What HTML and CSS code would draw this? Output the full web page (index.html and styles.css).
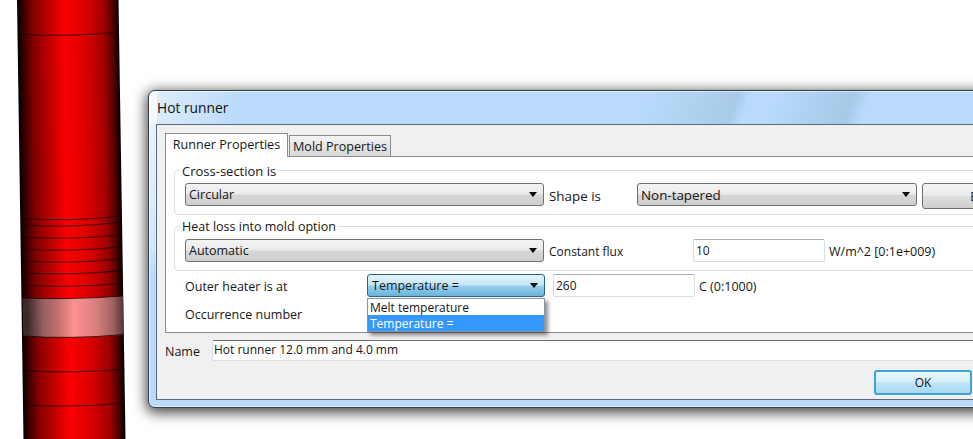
FILE: index.html
```html
<!DOCTYPE html>
<html lang="en">
<head>
<meta charset="utf-8">
<title>Hot runner</title>
<link rel="stylesheet" href="styles.css">
</head>
<body>
<div class="stage">
  <svg class="pipe" width="140" height="439" viewBox="0 0 140 439" aria-hidden="true">
    <defs>
      <linearGradient id="red" gradientUnits="userSpaceOnUse" x1="17" y1="0" x2="119" y2="-1.4">
        <stop offset="0" stop-color="#000"/>
        <stop offset=".05" stop-color="#300000"/>
        <stop offset=".15" stop-color="#800000"/>
        <stop offset=".3" stop-color="#bb0000"/>
        <stop offset=".46" stop-color="#fa0000"/>
        <stop offset=".5" stop-color="#f40000"/>
        <stop offset=".68" stop-color="#d80000"/>
        <stop offset=".85" stop-color="#a00000"/>
        <stop offset=".94" stop-color="#500000"/>
        <stop offset="1" stop-color="#000"/>
      </linearGradient>
      <linearGradient id="pink" gradientUnits="userSpaceOnUse" x1="23" y1="0" x2="124" y2="-1.4">
        <stop offset="0" stop-color="#3a2a2a"/>
        <stop offset=".15" stop-color="#945e5e"/>
        <stop offset=".3" stop-color="#c07070"/>
        <stop offset=".46" stop-color="#ff9090"/>
        <stop offset=".68" stop-color="#d88080"/>
        <stop offset=".85" stop-color="#a06060"/>
        <stop offset=".94" stop-color="#5a3a3a"/>
        <stop offset="1" stop-color="#3a2828"/>
      </linearGradient>
    </defs>
    <polygon points="17,0 118.5,0 125.5,439 23.5,439" fill="url(#red)"/>
    <path d="M22.500 298 Q70 299.500 123 296 L123.500 335 Q70 339.500 23 336 Z" fill="url(#pink)"/>
    <g fill="none" stroke="#1a0000" stroke-width=".8">
      <path d="M17.500 34 Q70 37.500 119 32"/>
      <path d="M21 218.500 Q70 222 121.500 216"/>
      <path d="M21 225 Q70 228.500 121.500 222"/>
      <path d="M21 237 Q70 240.500 122 234.500"/>
      <path d="M21.500 249 Q70 252.500 122 246.500"/>
      <path d="M21.500 261 Q70 264.500 122 258.500"/>
      <path d="M21.500 272.500 Q70 276 122.500 270.500"/>
      <path d="M22 285 Q70 288.500 123 283"/>
      <path d="M22 298 Q70 300 123 296"/>
      <path d="M22.500 336 Q70 339.500 124 334.500"/>
      <path d="M23 370.500 Q70 374 124.500 369"/>
      <path d="M23.500 405 Q70 408 125 403"/>
    </g>
  </svg>

  <section class="dialog">
    <h1 class="title">Hot runner</h1>
    <div class="client">
      <div class="tabs">
        <span class="tab tab-active">Runner Properties</span>
        <span class="tab">Mold Properties</span>
      </div>
      <div class="pane">
        <fieldset class="group">
          <legend class="fs-13">Cross-section is</legend>
          <div class="row">
            <div class="select w-wide"><span class="fs-125">Circular</span><i class="arrow"></i></div>
            <span class="label w-shape fs-135">Shape is</span>
            <div class="select w-shape-select"><span class="fs-135">Non-tapered</span><i class="arrow"></i></div>
            <button class="btn btn-edit" type="button">Edit</button>
          </div>
        </fieldset>
        <fieldset class="group group-second">
          <legend class="fs-125">Heat loss into mold option</legend>
          <div class="row">
            <div class="select w-wide"><span class="fs-125">Automatic</span><i class="arrow"></i></div>
            <span class="label w-flux">Constant flux</span>
            <div class="input w-flux-input">10</div>
            <span class="label unit fs-125">W/m^2 [0:1e+009)</span>
          </div>
        </fieldset>
        <div class="row row-heater">
          <span class="label w-heater fs-125">Outer heater is at</span>
          <div class="combo">
            <div class="select select-open w-temp"><span class="fs-125">Temperature =</span><i class="arrow"></i></div>
            <ul class="menu">
              <li>Melt temperature</li>
              <li class="menu-selected">Temperature =</li>
            </ul>
          </div>
          <div class="input w-temp-input">260</div>
          <span class="label fs-125">C (0:1000)</span>
        </div>
        <div class="row row-occurrence">
          <span class="label fs-125">Occurrence number</span>
        </div>
      </div>
      <div class="name-row">
        <span class="label w-name">Name</span>
        <div class="input input-name">Hot runner 12.0 mm and 4.0 mm</div>
      </div>
      <div class="actions">
        <button class="btn btn-ok" type="button">OK</button>
      </div>
    </div>
  </section>
</div>
</body>
</html>
```

FILE: styles.css
```css
* { box-sizing: border-box; }
html, body { margin: 0; padding: 0; background: #fff; }
body { font-family: "Open Sans", "Liberation Sans", sans-serif; font-size: 12px; color: #161616; }

.fs-125 { font-size: 12.5px; }
.fs-13 { font-size: 13px; }
.fs-135 { font-size: 13.4px; }

.stage { position: relative; width: 973px; height: 439px; overflow: hidden; background: #fff; }
.pipe { position: absolute; left: 0; top: 0; }

.dialog {
  position: absolute; left: 148px; top: 90px; width: 920px; height: 318px;
  padding: 0 7px 7px;
  border: 1px solid #33414c; border-radius: 7px;
  background:
    linear-gradient(180deg, rgba(255,255,255,.75) 0, rgba(255,255,255,.35) 50%, rgba(255,255,255,0) 57%) left top / 8px 100% no-repeat,
    linear-gradient(110deg, rgba(169,203,233,0) 0 468px, #a9cbe9 555px, #b9dafa 566px, #b9dafa 590px, #a6c9e8 663px, #b9dafa 679px, rgba(185,218,250,0) 680px) left top / 100% 34px no-repeat,
    linear-gradient(100deg, rgba(255,255,255,.55) 0, rgba(255,255,255,0) 95px) left top / 100% 34px no-repeat,
    #b9dafa;
  box-shadow: 0 3px 13px 2px rgba(0,0,0,.72), inset 0 0 0 1px rgba(255,255,255,.55);
}
.title {
  margin: 0; height: 33px; padding: 7px 0 0 1px;
  font-size: 13.8px; font-weight: 400; line-height: 20px; color: #111;
}
.client {
  height: 276px; padding: 8px 0 0 8px;
  border: 1px solid #5c6b78; background: #f0f0f0;
}
.tabs { display: flex; align-items: flex-end; height: 23px; position: relative; z-index: 1; font-size: 12.6px; }
.tab {
  display: flex; align-items: center; justify-content: center;
  width: 102px; height: 21px; margin-left: 1px;
  border: 1px solid #8a8a94; border-bottom: 0;
  background: linear-gradient(180deg, #f4f4f4, #d8d8d8);
}
.tab-active {
  width: 123px; height: 24px; margin: 0 0 -1px 0; padding-bottom: 2px;
  background: #fff; border-color: #8a8a94;
}
.pane {
  height: 177px; padding: 6px 0 0 8px;
  border: 1px solid #8a8a94; background: #fff;
}
.group {
  display: block; width: 900px; height: 52px; margin: 0; padding: 5px 0 0 10px; min-width: 0;
  border: 1px solid #d5dfe7; border-radius: 4px;
}
.group-second { margin-top: 4px; }
.group legend { margin-left: -5px; padding: 1px 2px 0; line-height: 14px; height: 15px; white-space: nowrap; }

.row { display: flex; align-items: center; height: 23px; white-space: nowrap; }
.label { display: block; flex: none; padding-top: 1px; }
.select {
  flex: none; position: relative; display: flex; align-items: center; height: 23px; padding: 0 3px;
  border: 1px solid #707070; border-radius: 3px;
  background: linear-gradient(180deg, #f3f3f3 0, #ebebeb 48%, #d6d6d6 52%, #cfcfcf 100%);
}
.arrow {
  position: absolute; right: 6px; top: 8px; width: 0; height: 0;
  border-left: 4.5px solid transparent; border-right: 4.5px solid transparent; border-top: 5px solid #000;
}
.select-open {
  border-color: #2c628b; padding-left: 4px;
  background: linear-gradient(180deg, #e5f4fc 0, #c4e5f6 48%, #98d1ef 52%, #68b3db 100%);
}
.input {
  flex: none; height: 23px; padding: 2px 2px 0;
  border: 1px solid #d5dfe5; border-top-color: #abadb3; border-radius: 2px; background: #fff;
}
.w-wide { width: 359px; }
.w-shape { width: 93px; padding-left: 5px; padding-top: 3px; }
.w-shape-select { width: 280px; }
.btn-edit { margin-left: 5px; width: 118px; height: 26px; align-self: flex-start; }
.w-flux { width: 149px; padding-left: 5px; }
.w-flux-input { width: 132px; }
.unit { margin-left: 4px; }

.row-heater { margin: 3px 0 0 11px; }
.w-heater { width: 182px; }
.combo { position: relative; flex: none; }
.w-temp { width: 178px; }
.w-temp-input { width: 142px; margin-left: 8px; }
.row-heater .input + .label { margin-left: 4px; }
.menu {
  position: absolute; left: 0; top: 24px; width: 178px; margin: 0; padding: 0; list-style: none;
  border: 1px solid #8a98a4; background: #fff; box-shadow: 3px 3px 4px rgba(0,0,0,.45);
}
.menu li { height: 16px; padding: 1px 2px 0; line-height: 16px; }
.menu .menu-selected { background: #3399ff; color: #fff; }
.row-occurrence { margin: 5px 0 0 11px; }

.name-row { display: flex; align-items: center; height: 21px; margin-top: 7px; }
.w-name { width: 47px; font-size: 12.5px; }
.input-name { width: 800px; height: 21px; padding: 0 1px; border-top-color: #6e6e6e; }

.btn {
  font: inherit; color: #111; padding: 0;
  border: 1px solid #707070; border-radius: 3px;
  background: linear-gradient(180deg, #f2f2f2 0, #ebebeb 48%, #dddddd 52%, #cfcfcf 100%);
}
.actions { margin: 9px 0 0 709px; }
.btn-ok {
  display: block; width: 98px; height: 25px;
  border: 2px solid #3ca4d8;
  background: linear-gradient(180deg, #e9f6fd 0, #d5eefa 48%, #bde4f7 52%, #a9d9f2 100%);
}
```
